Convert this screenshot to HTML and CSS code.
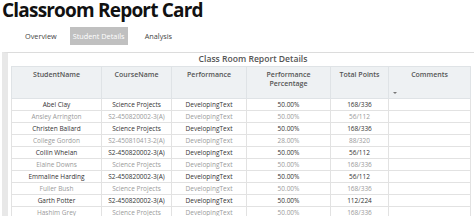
FILE: index.html
```html
<!DOCTYPE html>
<html lang="en">

<head>
    <meta charset="UTF-8">
    <meta name="viewport" content="width=device-width, initial-scale=1.0">
    <title>Classroom Report Card</title>
    <link rel="stylesheet" href="styles.css">
</head>

<body>
    <h1 class="page-title">Classroom Report Card</h1>

    <div class="tabs">
        <span class="tab">Overview</span>
        <span class="tab active">Student Details</span>
        <span class="tab">Analysis</span>
    </div>

    <div class="report-panel">
        <div class="panel-title">Class Room Report Details</div>
        <table class="report-table">
            <colgroup>
                <col class="c-name">
                <col class="c-course">
                <col class="c-perf">
                <col class="c-pct">
                <col class="c-points">
                <col class="c-comments">
            </colgroup>
            <thead>
                <tr>
                    <th>StudentName</th>
                    <th>CourseName</th>
                    <th>Performance</th>
                    <th>Performance<br>Percentage</th>
                    <th>Total Points</th>
                    <th>Comments<span class="sort-arrow"></span></th>
                </tr>
            </thead>
            <tbody>
                <tr><td>Abel Clay</td><td>Science Projects</td><td>DevelopingText</td><td>50.00%</td><td>168/336</td><td></td></tr>
                <tr class="muted"><td>Ansley Arrington</td><td>S2-450820002-3(A)</td><td>DevelopingText</td><td>50.00%</td><td>56/112</td><td></td></tr>
                <tr><td>Christen Ballard</td><td>Science Projects</td><td>DevelopingText</td><td>50.00%</td><td>168/336</td><td></td></tr>
                <tr class="muted"><td>College Gordon</td><td>S2-450810413-2(A)</td><td>DevelopingText</td><td>28.00%</td><td>88/320</td><td></td></tr>
                <tr><td>Collin Whelan</td><td>S2-450820002-3(A)</td><td>DevelopingText</td><td>50.00%</td><td>56/112</td><td></td></tr>
                <tr class="muted"><td>Elaine Downs</td><td>Science Projects</td><td>DevelopingText</td><td>50.00%</td><td>168/336</td><td></td></tr>
                <tr><td>Emmaline Harding</td><td>S2-450820002-3(A)</td><td>DevelopingText</td><td>50.00%</td><td>56/112</td><td></td></tr>
                <tr class="muted"><td>Fuller Bush</td><td>Science Projects</td><td>DevelopingText</td><td>50.00%</td><td>168/336</td><td></td></tr>
                <tr><td>Garth Potter</td><td>S2-450820002-3(A)</td><td>DevelopingText</td><td>50.00%</td><td>112/224</td><td></td></tr>
                <tr class="muted"><td>Hashim Grey</td><td>Science Projects</td><td>DevelopingText</td><td>50.00%</td><td>168/336</td><td></td></tr>
            </tbody>
        </table>
    </div>
</body>

</html>
```
FILE: styles.css
```css
body {
    font-family: 'Open Sans', sans-serif;
    background-color: #fff;
    margin: 0;
    overflow: hidden;
    color: #222;
}

.page-title {
    margin: 0;
    padding-left: 2px;
    font-size: 19px;
    line-height: 20px;
    font-weight: 700;
    letter-spacing: -0.8px;
    color: #111;
}

.tabs {
    display: flex;
    align-items: center;
    margin-top: 7px;
    padding-left: 25px;
    height: 18px;
}

.tab {
    font-size: 7.3px;
    color: #444;
    line-height: 18px;
    margin-right: 13px;
}

.tab.active {
    background-color: #c0c0c0;
    color: #fff;
    width: 58px;
    text-align: center;
    margin-right: 17px;
}

.report-panel {
    margin: 7px 0 0 2px;
    background-color: #fff;
    border-top: 1px solid #dcdcdc;
    border-left: 6px solid #e8e8e8;
    padding-left: 3px;
    width: 470px;
}

.panel-title {
    text-align: center;
    padding-left: 14px;
    font-size: 8.6px;
    font-weight: 600;
    color: #555;
    line-height: 13px;
}

.report-table {
    border-collapse: collapse;
    table-layout: fixed;
    width: 460px;
}

.c-name { width: 90px; }
.c-course { width: 70px; }
.c-perf { width: 75px; }
.c-pct { width: 84px; }
.c-points { width: 58px; }
.c-comments { width: 82px; }

.report-table th {
    background-color: #eef1f3;
    border: 1px solid #dfe3e6;
    height: 28px;
    vertical-align: top;
    padding: 3px 2px 0;
    font-size: 7px;
    font-weight: 600;
    line-height: 9px;
    color: #555;
    position: relative;
}

.sort-arrow {
    position: absolute;
    left: 4px;
    bottom: 4px;
    border-left: 2px solid transparent;
    border-right: 2px solid transparent;
    border-top: 2px solid #777;
}

.report-table td {
    border: 1px solid #e2e2e2;
    text-align: center;
    font-size: 6.5px;
    line-height: 11px;
    height: 11px;
    padding: 0 2px;
    color: #333;
    white-space: nowrap;
    overflow: hidden;
}

.report-table tr.muted td {
    color: #9a9a9a;
}
```
